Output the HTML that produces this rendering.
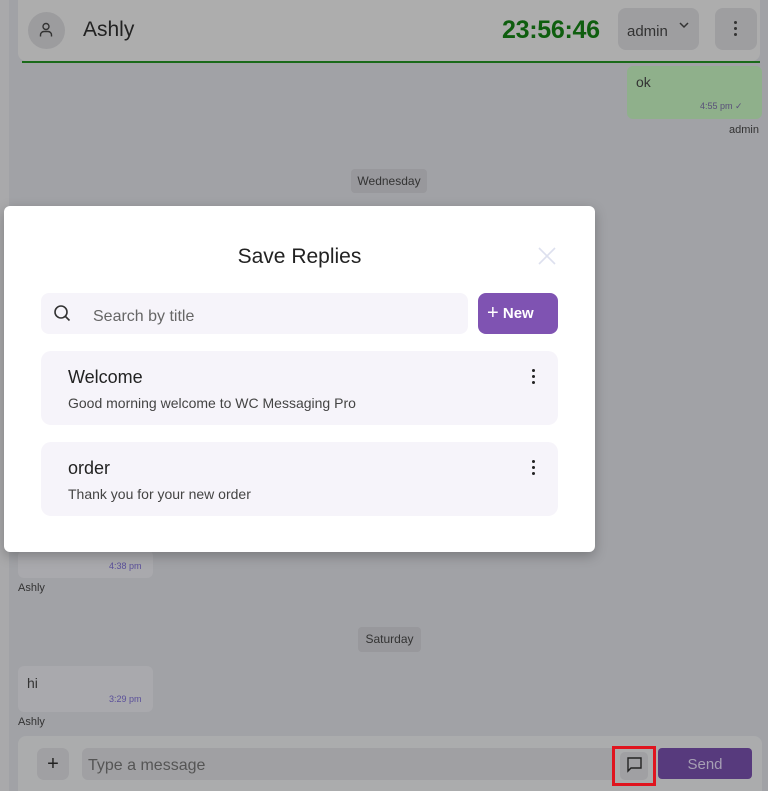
<!DOCTYPE html>
<html><head><meta charset="utf-8"><style>
*{box-sizing:border-box;margin:0;padding:0}
body{width:768px;height:791px;overflow:hidden;background:#a1a2a6;font-family:"Liberation Sans",sans-serif;position:relative;color:#222}
.abs{position:absolute}
.left{left:0;top:0;width:9px;height:791px;background:#a9a9ab}
.hdr{left:18px;top:0;width:742px;height:61px;background:#adadad;border-radius:0 0 8px 8px}
.gl{left:22px;top:61px;width:738px;height:2px;background:#1a6a1a}
.pill{background:#98989c;border-radius:4px;font-size:12px;color:#333;text-align:center}
.bub{background:#a9a9ad;border-radius:6px}
.modal{left:4px;top:206px;width:591px;height:346px;background:#fff;border-radius:6px;box-shadow:0 4px 12px rgba(0,0,0,.25)}
.card{position:absolute;left:37px;width:517px;height:74px;background:#f6f4fa;border-radius:10px}
.card .t{position:absolute;left:27px;top:16px;font-size:18px;color:#222}
.card .d{position:absolute;left:27px;top:44px;font-size:14px;color:#444}
.dots{position:absolute;right:22px;top:18px;width:4px}
.dots i{display:block;width:3px;height:3px;background:#222;border-radius:50%;margin-bottom:3px}
</style></head><body>
<div class="abs left"></div>
<div class="abs hdr"></div>
<div class="abs" style="left:28px;top:12px;width:37px;height:37px;border-radius:50%;background:#9c9c9e"></div>
<svg class="abs" style="left:37px;top:21px" width="18" height="18" viewBox="0 0 18 18" fill="none" stroke="#333" stroke-width="1.4"><circle cx="9" cy="5.5" r="3"/><path d="M3.5 15.5v-1.5a3.5 3.5 0 0 1 3.5-3.5h4a3.5 3.5 0 0 1 3.5 3.5v1.5"/></svg>
<div class="abs" style="left:83px;top:18px;font-size:21px;color:#222">Ashly</div>
<div class="abs" style="left:502px;top:16px;font-size:25px;color:#0f5e0f;font-weight:bold;letter-spacing:-0.3px">23:56:46</div>
<div class="abs" style="left:618px;top:8px;width:81px;height:42px;background:#9e9ea0;border-radius:8px"></div>
<div class="abs" style="left:627px;top:23px;font-size:15px;color:#333">admin</div>
<svg class="abs" style="left:678px;top:20px" width="12" height="10" viewBox="0 0 12 10" fill="none" stroke="#333" stroke-width="1.5"><path d="M2 3l4 4 4-4"/></svg>
<div class="abs" style="left:715px;top:8px;width:42px;height:42px;background:#9e9ea0;border-radius:8px"></div>
<div class="abs" style="left:734px;top:21px;width:4px"><i style="display:block;width:3px;height:3px;background:#333;border-radius:50%;margin-bottom:3px"></i><i style="display:block;width:3px;height:3px;background:#333;border-radius:50%;margin-bottom:3px"></i><i style="display:block;width:3px;height:3px;background:#333;border-radius:50%"></i></div>
<div class="abs gl"></div>
<div class="abs" style="left:627px;top:66px;width:135px;height:53px;background:#8fb08b;border-radius:6px"></div>
<div class="abs" style="left:636px;top:74px;font-size:14px;color:#333">ok</div>
<div class="abs" style="left:700px;top:101px;font-size:9px;color:#5a4f7a">4:55 pm ✓</div>
<div class="abs" style="left:729px;top:124px;font-size:11px;color:#333">admin</div>
<div class="abs pill" style="left:351px;top:169px;width:76px;height:24px;line-height:24px">Wednesday</div>
<div class="abs bub" style="left:18px;top:550px;width:135px;height:28px"></div>
<div class="abs" style="left:109px;top:561px;font-size:9px;color:#5a4f9a">4:38 pm</div>
<div class="abs" style="left:18px;top:582px;font-size:11px;color:#333">Ashly</div>
<div class="abs pill" style="left:358px;top:627px;width:63px;height:25px;line-height:25px">Saturday</div>
<div class="abs bub" style="left:18px;top:666px;width:135px;height:46px"></div>
<div class="abs" style="left:27px;top:675px;font-size:14px;color:#333">hi</div>
<div class="abs" style="left:109px;top:694px;font-size:9px;color:#5a4f9a">3:29 pm</div>
<div class="abs" style="left:18px;top:716px;font-size:11px;color:#333">Ashly</div>
<div class="abs" style="left:18px;top:736px;width:744px;height:55px;background:#abacad;border-radius:8px 8px 0 0"></div>
<div class="abs" style="left:37px;top:748px;width:32px;height:32px;background:#a0a0a3;border-radius:7px;text-align:center;line-height:32px;font-size:20px;color:#222">+</div>
<div class="abs" style="left:82px;top:748px;width:530px;height:32px;background:#a0a0a3;border-radius:6px 0 0 6px"></div>
<div class="abs" style="left:88px;top:757px;font-size:16px;color:#555">Type a message</div>
<div class="abs" style="left:612px;top:746px;width:44px;height:40px;border:3px solid #e0141e"></div>
<div class="abs" style="left:620px;top:752px;width:28px;height:28px;background:#a0a0a3;border-radius:5px"></div>
<svg class="abs" style="left:626px;top:756px" width="17" height="17" viewBox="0 0 17 17" fill="none" stroke="#222" stroke-width="1.4"><path d="M2 2h13v10H5l-3 3z"/></svg>
<div class="abs" style="left:658px;top:748px;width:94px;height:31px;background:#573a7d;border-radius:4px;text-align:center;line-height:34px;font-size:15px;color:#a69fb4">Send</div>

<div class="abs modal">
  <div class="abs" style="left:0;width:591px;top:39px;text-align:center;font-size:21px;color:#222">Save Replies</div>
  <svg class="abs" style="left:533px;top:40px" width="20" height="20" viewBox="0 0 20 20" stroke="#dde0ee" stroke-width="1.6"><path d="M2 2l16 16M18 2L2 18"/></svg>
  <div class="abs" style="left:37px;top:87px;width:427px;height:41px;background:#f6f4fa;border-radius:8px"></div>
  <svg class="abs" style="left:49px;top:98px" width="19" height="19" viewBox="0 0 19 19" fill="none" stroke="#333" stroke-width="1.6"><circle cx="8" cy="8" r="6"/><path d="M12.5 12.5l4 4"/></svg>
  <div class="abs" style="left:89px;top:102px;font-size:16px;color:#666">Search by title</div>
  <div class="abs" style="left:474px;top:87px;width:80px;height:41px;background:#7f53b2;border-radius:8px;color:#fff;font-size:15px;font-weight:bold;line-height:41px;padding-left:9px"><span style="font-weight:normal;font-size:20px;vertical-align:-1px">+</span> New</div>
  <div class="card" style="top:145px"><div class="t">Welcome</div><div class="d">Good morning welcome to WC Messaging Pro</div><div class="dots"><i></i><i></i><i></i></div></div>
  <div class="card" style="top:236px"><div class="t">order</div><div class="d">Thank you for your new order</div><div class="dots"><i></i><i></i><i></i></div></div>
</div>
</body></html>
